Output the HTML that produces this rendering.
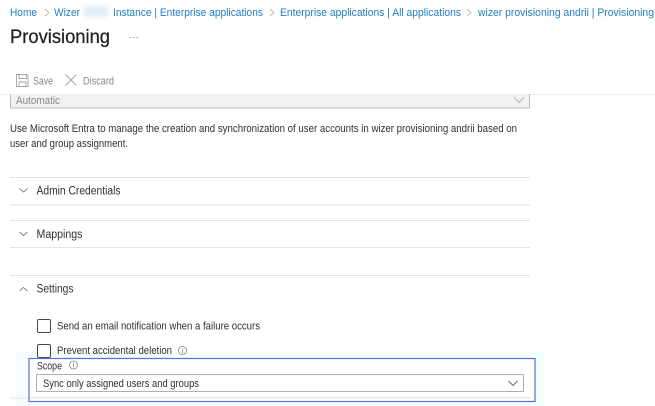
<!DOCTYPE html>
<html><head><meta charset="utf-8"><style>
html,body{margin:0;padding:0;background:#fff;width:655px;height:406px;overflow:hidden}
svg{display:block;position:absolute;left:0;top:0;filter:blur(.3px)}
text{font-family:"Liberation Sans",sans-serif;font-size:11px;fill:#323130}
.l{fill:#1f7fbf;font-size:11px}
.g{fill:#8a8886}
.c{fill:none;stroke:#605e5c;stroke-width:.8}
.b{fill:none;stroke:#a8a8a8;stroke-width:.8}
.h{fill:#e3e3e3}
</style></head><body>
<svg width="655" height="406" viewBox="0 0 655 406" xmlns="http://www.w3.org/2000/svg">
<defs><filter id="b" x="-30%" y="-50%" width="160%" height="200%"><feGaussianBlur stdDeviation="2"/></filter></defs>

<text class="l" x="10" y="16" textLength="27" lengthAdjust="spacingAndGlyphs">Home</text>
<path class="b" d="M45 9l4 3.500-4 3.500"/>
<text class="l" x="54" y="16" textLength="26" lengthAdjust="spacingAndGlyphs">Wizer</text>
<rect x="84" y="6" width="24" height="11" fill="#e0edf8" filter="url(#b)"/>
<text class="l" x="113" y="16" textLength="150" lengthAdjust="spacingAndGlyphs">Instance | Enterprise applications</text>
<path class="b" d="M270 9l4 3.500-4 3.500"/>
<text class="l" x="280" y="16" textLength="181" lengthAdjust="spacingAndGlyphs">Enterprise applications | All applications</text>
<path class="b" d="M467 9l4 3.500-4 3.500"/>
<text class="l" x="478" y="16" textLength="176" lengthAdjust="spacingAndGlyphs">wizer provisioning andrii | Provisioning</text>

<text x="10" y="43" style="font-size:19.500px;fill:#201f1e;stroke:#201f1e;stroke-width:.25" textLength="100" lengthAdjust="spacingAndGlyphs">Provisioning</text>
<text class="g" x="129" y="38" style="font-size:9px" textLength="10" lengthAdjust="spacingAndGlyphs">...</text>

<g fill="none" stroke="#a3a3a3" stroke-width=".9">
<path d="M16.500 74.500h10l1.500 1.500v10.500h-11.500z"/><path d="M19 74.500v4h7.500v-4M19 86.500v-4.500h7v4.500"/>
<path d="M65.500 74.500l11 11M76.500 74.500l-11 11"/>
</g>
<text class="g" x="33" y="84.500" textLength="20" lengthAdjust="spacingAndGlyphs">Save</text>
<text class="g" x="83" y="84.500" textLength="31" lengthAdjust="spacingAndGlyphs">Discard</text>

<rect x="0" y="94" width="655" height="1" fill="#ececec"/>
<rect x="10" y="94" width="520" height="14" fill="#f3f2f1"/>
<rect x="10" y="94" width="1" height="14" fill="#bdbdbd"/>
<rect x="529" y="94" width="1" height="14" fill="#bdbdbd"/>
<rect x="10" y="107.500" width="520" height="1" fill="#bdbdbd"/>
<text class="g" x="16" y="104" textLength="44" lengthAdjust="spacingAndGlyphs">Automatic</text>
<path fill="none" stroke="#b5b5b5" stroke-width="1" d="M514 97.500l5 5 5-5"/>

<text x="10" y="132" textLength="507" lengthAdjust="spacingAndGlyphs">Use Microsoft Entra to manage the creation and synchronization of user accounts in wizer provisioning andrii based on</text>
<text x="10" y="147" textLength="118" lengthAdjust="spacingAndGlyphs">user and group assignment.</text>

<rect class="h" x="10" y="177" width="520" height="1"/>
<rect class="h" x="10" y="204.500" width="520" height="1"/>
<rect class="h" x="10" y="220" width="520" height="1"/>
<rect class="h" x="10" y="247" width="520" height="1"/>
<rect class="h" x="10" y="275" width="520" height="1"/>

<path class="c" d="M19.500 188.500l4 3.500 4-3.500"/>
<text x="36.500" y="194.500" style="font-size:11.500px" textLength="84" lengthAdjust="spacingAndGlyphs">Admin Credentials</text>
<path class="c" d="M19.500 232l4 3.500 4-3.500"/>
<text x="36.500" y="238" style="font-size:11.500px" textLength="46" lengthAdjust="spacingAndGlyphs">Mappings</text>
<path class="c" d="M19.500 291l4-3.500 4 3.500"/>
<text x="36.500" y="292.500" style="font-size:11.500px" textLength="37" lengthAdjust="spacingAndGlyphs">Settings</text>

<rect x="37.500" y="319.500" width="13" height="13" rx="1.500" fill="#fff" stroke="#4a4a4a"/>
<text x="57" y="329.500" textLength="203" lengthAdjust="spacingAndGlyphs">Send an email notification when a failure occurs</text>

<rect x="16" y="352" width="528" height="54" fill="#f4feff"/>
<rect x="37.500" y="344.500" width="13" height="13" rx="1.500" fill="#fff" stroke="#4a4a4a"/>
<text x="57" y="354" textLength="115" lengthAdjust="spacingAndGlyphs">Prevent accidental deletion</text>
<circle cx="182.500" cy="350.500" r="4" fill="none" stroke="#8a8886" stroke-width=".8"/>
<path d="M182.500 349.500v3.500M182.500 348v.9" stroke="#8a8886" stroke-width=".8"/>

<rect x="10" y="397.500" width="520" height="1" fill="#e3e3e3"/>
<rect x="29" y="358.500" width="506" height="43" fill="#fff" stroke="#5b6fd6" stroke-width="1.200"/>
<rect x="30" y="397" width="500" height="1.500" fill="#e6e6e6"/>
<text x="37" y="369.500" textLength="25" lengthAdjust="spacingAndGlyphs">Scope</text>
<circle cx="73.500" cy="365" r="4" fill="none" stroke="#8a8886" stroke-width=".8"/>
<path d="M73.500 364v3.500M73.500 362.500v.9" stroke="#8a8886" stroke-width=".8"/>
<rect x="36.500" y="374.500" width="487" height="17" fill="#fff" stroke="#b0b0b0" stroke-width="1"/>
<text x="43" y="387" textLength="156" lengthAdjust="spacingAndGlyphs">Sync only assigned users and groups</text>
<path fill="none" stroke="#605e5c" stroke-width=".9" d="M508.500 381l4.500 4.500 4.500-4.500"/>
</svg>
</body></html>
